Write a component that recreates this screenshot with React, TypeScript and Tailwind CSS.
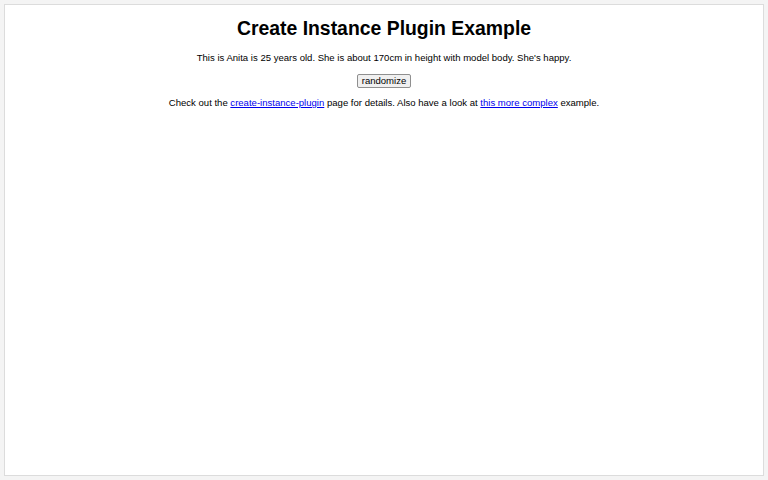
import React, { useState } from 'react'

const names = ['Anita', 'Maria', 'Linda', 'Sofia']
const moods = ['happy', 'sad', 'bored', 'excited']

const App = () => {
  const [person, setPerson] = useState({ name: 'Anita', age: 25, height: 170, body: 'model', mood: 'happy' })

  const randomize = () => {
    setPerson({
      name: names[Math.floor(Math.random() * names.length)],
      age: 18 + Math.floor(Math.random() * 40),
      height: 150 + Math.floor(Math.random() * 40),
      body: 'model',
      mood: moods[Math.floor(Math.random() * moods.length)],
    })
  }

  return (
    <div className="min-h-screen bg-[#f4f4f4] p-[4px] font-['Liberation_Sans',Arial,sans-serif] text-black">
      <div className="h-[472px] bg-white border border-[#dcdcdc] text-center">
        <h1 className="text-[19.4px] font-bold pt-[12px] leading-[22px]">Create Instance Plugin Example</h1>
        <p className="text-[9.55px] leading-[12px] mt-[13px]">
          This is {person.name} is {person.age} years old. She is about {person.height}cm in height with {person.body} body. She's {person.mood}.
        </p>
        <button
          type="button"
          onClick={randomize}
          className="mt-[10px] text-[9.55px] leading-[12px] px-[4px] py-[0px] border border-[#8f8f8f] rounded-[2px] bg-[#f0f0f0]"
        >
          randomize
        </button>
        <p className="text-[9.55px] leading-[12px] mt-[6px]">
          Check out the <a href="#" className="text-[#0000ee] underline">create-instance-plugin</a> page for details. Also have a look at{' '}
          <a href="#" className="text-[#0000ee] underline">this more complex</a> example.
        </p>
      </div>
    </div>
  )
}

export default App
